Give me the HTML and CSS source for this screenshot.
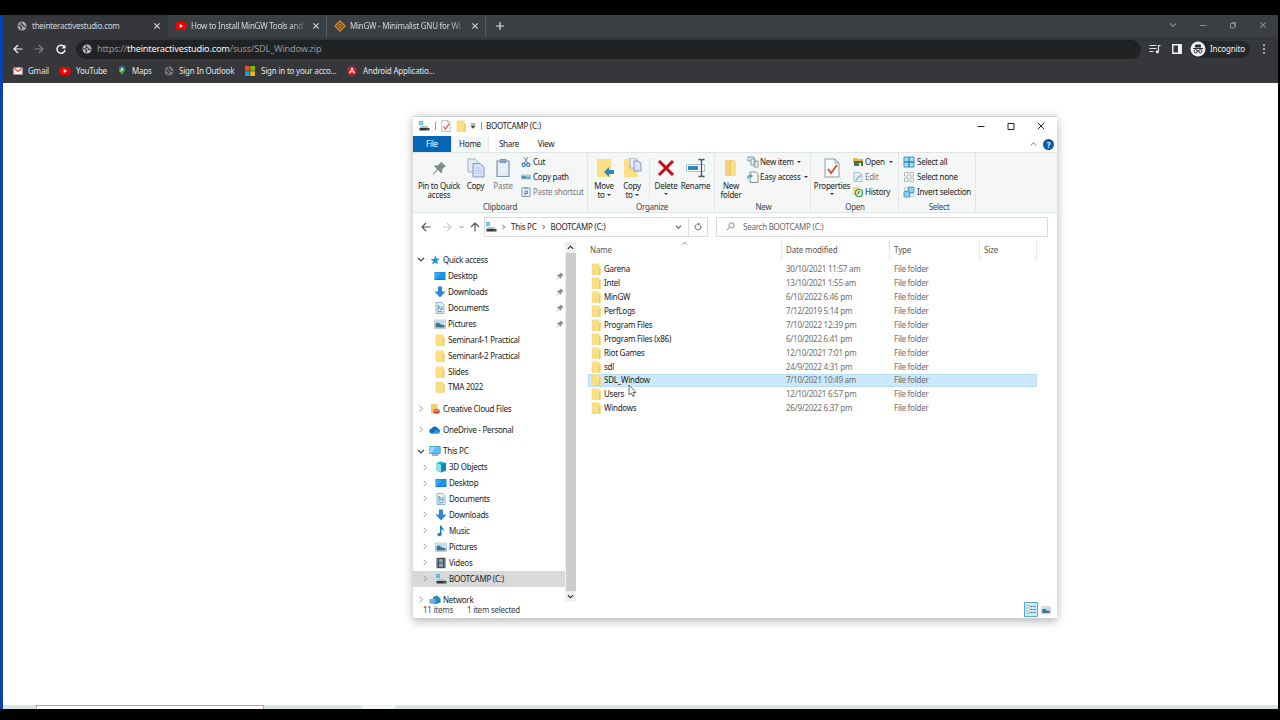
FILE: index.html
```
<!DOCTYPE html>
<html lang="en">
<head>
    <meta charset="UTF-8">
    <meta name="viewport" content="width=device-width, initial-scale=1.0">
    <title>theinteractivestudio.com</title>
    <link rel="stylesheet" href="styles.css">
</head>
<body>

    <!-- Shared icons -->
    <svg class="sprite">
        <symbol id="folder" viewBox="0 0 10 12"><path d="M1 .5h7.5v2L9.5 3v8.5H1z" fill="#fbdf85"/><path d="M8.300 3.500h1.200v8H7.500z" fill="#efcb68"/><path d="M1 .5v11h8.500" fill="none" stroke="#efd27a" stroke-width=".6"/></symbol>
        <symbol id="globe" viewBox="0 0 10 10"><circle cx="5" cy="5" r="4.500" fill="currentColor"/><path d="M1.300 4.200l2.500 1 .8 1.600-.8 1.700M4.500 1.500L4 3l2 .8.500 1.500 2.300.4" fill="none" stroke="#292a2d" stroke-width="1.100"/></symbol>
        <symbol id="youtube" viewBox="0 0 12 10"><rect x=".5" y="1" width="11" height="8" rx="2.500" fill="#f00000"/><path d="M4.700 3l3.400 2-3.400 2z" fill="#fff"/></symbol>
        <symbol id="close" viewBox="0 0 8 8"><path d="M1.300 1.300l5.400 5.400M6.700 1.300L1.300 6.700" fill="none" stroke="currentColor" stroke-width="1.100"/></symbol>
        <symbol id="right" viewBox="0 0 6 8"><path d="M1.500 1l3 3-3 3" fill="none" stroke="currentColor"/></symbol>
        <symbol id="down" viewBox="0 0 8 6"><path d="M1 1.500l3 3 3-3" fill="none" stroke="currentColor" stroke-width="1.200"/></symbol>
        <symbol id="up" viewBox="0 0 8 6"><path d="M1 4.500l3-3 3 3" fill="none" stroke="currentColor" stroke-width="1.200"/></symbol>
        <symbol id="arrow" viewBox="0 0 10 10"><path d="M9.500 5H1.200M5 1L1 5l4 4" fill="none" stroke="currentColor" stroke-width="1.200"/></symbol>
        <symbol id="drive" viewBox="0 0 12 12"><path d="M1 1h1.700v1.700H1zM3.300 1H5v1.700H3.300zM1 3.300h1.700V5H1zM3.300 3.300H5V5H3.300z" fill="#27b5d8"/><path d="M2.500 6h7l1.500 2.500H1.500z" fill="#b9bec2"/><path d="M1.500 8h10v2.500h-10z" fill="#30383c"/><path d="M8.500 8.800h2v.8h-2z" fill="#4fd36a"/></symbol>
        <symbol id="pin" viewBox="0 0 16 16"><path d="M9.500 1L15 6.500l-1.600.5-2.700 2.700.2 2.800-1.200 1L6.400 10.200 1.500 15l-.8-.3.4-.9L5.500 9.300 2.200 6.200l1.100-1.200 2.900.2L8.900 2.600z" fill="#828b91"/></symbol>
        <symbol id="desktop" viewBox="0 0 12 12"><path d="M.5 2h11v8H.5z" fill="#1378c8"/><path d="M1 2.500h10v6.500H1z" fill="#1896e6"/><path d="M1 2.500h6L2 9H1z" fill="#2eabf2"/></symbol>
        <symbol id="download" viewBox="0 0 12 12"><path d="M4 .5h4v5h3.500L6 11.500.5 5.500H4z" fill="#2e86d6"/></symbol>
        <symbol id="document" viewBox="0 0 12 12"><path d="M2 .5h6l2 2v9H2z" fill="#e9f2f8" stroke="#85a1b5" stroke-width=".8"/><path d="M4 3v5.500M4.500 3.500l2.500 4.500M8 4v4.500M3.500 9.700H8" stroke="#3787bb" stroke-width=".9" fill="none"/></symbol>
        <symbol id="picture" viewBox="0 0 12 12"><path d="M.5 2h11v8.500H.5z" fill="#e9f1f5" stroke="#a7b8c1" stroke-width=".7"/><path d="M1.500 3h9v3h-9z" fill="#b6dcf0"/><path d="M1.500 5.500l2.500-1 3 2 3.500.5v2.500h-9z" fill="#3f7287"/></symbol>
        <symbol id="check" viewBox="0 0 16 20"><path d="M1 1h10l4 4v14H1z" fill="#fbfcfd" stroke="#8f999f"/><path d="M11 1v4h4" fill="none" stroke="#8f999f"/><path d="M4 11l3 4 6-8" fill="none" stroke="#d7552d" stroke-width="2"/></symbol>
        <symbol id="pages" viewBox="0 0 18 20"><path d="M1 1h7l3 3v10H1z" fill="#e8edf8" stroke="#9fb0ca"/><path d="M6 5.500h7l4 3.500v10H6z" fill="#dbe3fa" stroke="#8498bd"/><path d="M8 10h6M8 12.500h7M8 15h7" stroke="#b9c6ea"/></symbol>
    </svg>

    <div class="screen">

        <!-- Browser chrome -->
        <div class="tabs">
            <div class="tab active"><svg class="ic10 gray"><use href="#globe"/></svg><span>theinteractivestudio.com</span><svg class="ic8"><use href="#close"/></svg></div>
            <div class="tab"><svg class="ic12"><use href="#youtube"/></svg><span class="fade">How to Install MinGW Tools and</span><svg class="ic8"><use href="#close"/></svg></div>
            <div class="tab"><svg class="ic12" viewBox="0 0 12 12"><path d="M6 1l5 5-5 5-5-5z" fill="none" stroke="#e88a1a" stroke-width="1.300"/><path d="M6 3.500L8.500 6 6 8.500 3.500 6z" fill="none" stroke="#e88a1a"/><path d="M6 4v4" stroke="#e88a1a"/></svg><span class="fade">MinGW - Minimalist GNU for Wi</span><svg class="ic8"><use href="#close"/></svg></div>
            <svg class="plus" viewBox="0 0 10 10"><path d="M5 1v8M1 5h8" stroke="#dfe1e5" stroke-width="1.200"/></svg>
            <div class="chrome-controls">
                <svg class="ic8"><use href="#down"/></svg>
                <svg class="ic8" viewBox="0 0 8 8"><path d="M.5 4.500h7" stroke="currentColor"/></svg>
                <svg class="ic8" viewBox="0 0 8 8"><path d="M1.500 2.500h4V7h-4zM3 2.500V1.500h3.500v4h-1" fill="none" stroke="currentColor"/></svg>
                <svg class="ic8"><use href="#close"/></svg>
            </div>
        </div>

        <div class="toolbar">
            <svg class="ic10 nav-back"><use href="#arrow"/></svg>
            <svg class="ic10 nav-next"><use href="#arrow"/></svg>
            <svg class="ic10 nav-reload" viewBox="0 0 10 10"><path d="M8.500 3.200A4 4 0 1 0 9 5.800" fill="none" stroke="#f1f3f4" stroke-width="1.500"/><path d="M9.500.5v4h-4z" fill="#f1f3f4"/></svg>
            <div class="omnibox"><svg class="ic10"><use href="#globe"/></svg><span class="url">https://<b>theinteractivestudio.com</b>/suss/SDL_Window.zip</span></div>
            <svg class="media" viewBox="0 0 12 10"><path d="M.5 1.500h7M.5 4.500h7M.5 7.500h4M9.500 7.500V1.500h2" fill="none" stroke="#dfe1e5" stroke-width="1.200"/><circle cx="8.300" cy="7.800" r="1.600" fill="#dfe1e5"/></svg>
            <svg class="panel" viewBox="0 0 10 10"><path d="M.8.8h8.400v8.400H.8z" fill="none" stroke="#f1f3f4" stroke-width="1.400"/><path d="M6 1h3v8H6z" fill="#f1f3f4"/></svg>
            <div class="incognito"><svg viewBox="0 0 16 16"><circle cx="8" cy="8" r="7.500" fill="#f1f3f4"/><path d="M5.500 3.500h5l.8 3H4.700zM3 7h10v.9H3z" fill="#292a2d"/><circle cx="5.700" cy="10.300" r="1.600" fill="none" stroke="#292a2d"/><circle cx="10.300" cy="10.300" r="1.600" fill="none" stroke="#292a2d"/><path d="M7 10h2" stroke="#292a2d"/></svg><span>Incognito</span></div>
            <svg class="dots" viewBox="0 0 4 10"><path d="M1.200.5h1.600v1.600H1.200zM1.200 4.200h1.600v1.600H1.200zM1.200 7.900h1.600v1.600H1.200z" fill="#f1f3f4"/></svg>
        </div>

        <div class="bookmarks">
            <a class="gmail"><svg class="ic10" viewBox="0 0 10 10"><path d="M.5 1.500h9v7h-9z" fill="#f6f3f2"/><path d="M1 2l4 3.500L9 2" fill="none" stroke="#df493c" stroke-width="1.300"/><path d="M.5 2h1v6.500h-1zM8.500 2h1v6.500h-1z" fill="#e8a29b"/></svg>Gmail</a>
            <a class="yt"><svg class="ic12"><use href="#youtube"/></svg>YouTube</a>
            <a class="maps"><svg class="ic10" viewBox="0 0 10 12"><path d="M5 .5a3.700 3.700 0 0 1 3.700 3.700C8.700 7 6 8 5 11.500 4 8 1.300 7 1.300 4.200A3.700 3.700 0 0 1 5 .5z" fill="#34a853"/><path d="M5 .5a3.700 3.700 0 0 0-3.300 2L4 4.200 7.300 1.300A3.700 3.700 0 0 0 5 .5z" fill="#4285f4"/><path d="M1.700 2.500L4 4.200 2 6.500A4 4 0 0 1 1.700 2.500z" fill="#ea4335"/><path d="M2 6.500L4 4.200l1 1L3.200 7.500z" fill="#fbbc04"/><circle cx="5" cy="4.200" r="1.300" fill="#fff"/></svg>Maps</a>
            <a class="outlook"><svg class="ic10 dim"><use href="#globe"/></svg>Sign In Outlook</a>
            <a class="ms"><svg class="ic10" viewBox="0 0 10 10"><path d="M0 0h4.700v4.700H0z" fill="#f25022"/><path d="M5.300 0H10v4.700H5.300z" fill="#7fba00"/><path d="M0 5.300h4.700V10H0z" fill="#00a4ef"/><path d="M5.300 5.300H10V10H5.300z" fill="#ffb900"/></svg>Sign in to your acco...</a>
            <a class="ng"><svg class="ic10" viewBox="0 0 10 10"><path d="M5 0l4.700 1.700L9 8 5 10 1 8 .3 1.700z" fill="#c8202f"/><path d="M2.500 7.500L5 1.800l2.500 5.700M3.500 5.800h3" fill="none" stroke="#fff"/></svg>Android Applicatio...</a>
        </div>

        <div class="page"></div>
        <div class="taskbar">
            <div class="search-strip"></div>
            <div class="task-gap"></div>
        </div>

        <!-- File Explorer window, floats over the page -->
        <div class="explorer">
            <div class="titlebar">
                <svg class="ic12"><use href="#drive"/></svg><i class="bar"></i>
                <svg class="t-check"><use href="#check"/></svg>
                <svg class="t-folder"><use href="#folder"/></svg>
                <svg class="t-menu" viewBox="0 0 6 6"><path d="M.8 1h4.400M1 3h4L3 5.300z" stroke="#444" stroke-width=".8" fill="#444"/></svg><i class="bar"></i>
                <span>BOOTCAMP (C:)</span>
                <div class="win-controls">
                    <svg class="ic8" viewBox="0 0 8 8"><path d="M.5 4.500h7" stroke="#222"/></svg>
                    <svg class="ic8" viewBox="0 0 8 8"><path d="M1 1.500h6v6H1z" fill="none" stroke="#222"/></svg>
                    <svg class="ic8" viewBox="0 0 8 8"><path d="M.8.8l6.400 6.400M7.200.8L.8 7.200" stroke="#222"/></svg>
                </div>
            </div>

            <div class="menu">
                <span class="file">File</span><span class="home">Home</span><span class="share">Share</span><span class="view">View</span>
                <svg class="collapse"><use href="#up"/></svg>
                <span class="help">?</span>
            </div>

            <div class="ribbon">
                <div class="group clipboard">
                    <div class="buttons">
                        <div class="big w52"><svg class="b-pin"><use href="#pin"/></svg>Pin to Quick<br>access</div>
                        <div class="big w21"><svg><use href="#pages"/></svg>Copy</div>
                        <div class="big w34 off"><svg viewBox="0 0 16 20"><path d="M2 3h12v15.500H2z" fill="#dfeafa" stroke="#7f97b2" stroke-width="1.200"/><path d="M5 1.500h6v3H5z" fill="#92a7bb" stroke="#7f97b2"/><path d="M4 8h8M4 11h8M4 14h8" stroke="#f7fbff"/></svg>Paste</div>
                        <div class="smalls">
                            <div><svg class="ic10" viewBox="0 0 10 10"><path d="M3 0l3.500 6M7 0L3.500 6" stroke="#6a8aa5" fill="none"/><circle cx="2.700" cy="7.700" r="1.600" fill="none" stroke="#2d82b7" stroke-width="1.200"/><circle cx="7.300" cy="7.700" r="1.600" fill="none" stroke="#2d82b7" stroke-width="1.200"/></svg>Cut</div>
                            <div><svg class="ic10" viewBox="0 0 10 10"><path d="M0 2.500h10v5H0z" fill="#9ecbdf"/><path d="M1 4l1 2.500 1-2 1 2L5 4M6 6h3" fill="none" stroke="#29667f" stroke-width=".8"/></svg>Copy path</div>
                            <div class="off"><svg class="ic10" viewBox="0 0 10 10"><path d="M1 1h8v8.500H1z" fill="#eef4fb" stroke="#7c97b8"/><path d="M4 8V4h2.500v2.500H4M3.500 1h3" fill="none" stroke="#4f79aa"/></svg>Paste shortcut</div>
                        </div>
                    </div>
                    <div class="label">Clipboard</div>
                </div>
                <div class="group organize">
                    <div class="buttons">
                        <div class="big w28"><svg viewBox="0 0 20 20"><path d="M3 1h14v18H3z" fill="#fbdf85"/><path d="M10 14l5-5v3h5v4h-5v3z" fill="#2988b5"/></svg>Move<br>to<i class="caret"></i></div>
                        <div class="big w28"><svg viewBox="0 0 20 20"><path d="M2 1h14v18H2z" fill="#fbdf85"/><path d="M8 0h5l2 2v8H8z" fill="#e8edf8" stroke="#9fb0ca"/><path d="M12 3h4l3 2v8h-7z" fill="#dbe3fa" stroke="#8498bd"/></svg>Copy<br>to<i class="caret"></i></div>
                        <i class="rule"></i>
                        <div class="big w28"><svg viewBox="0 0 20 20"><path d="M3 3l14 14M17 3L3 17" stroke="#c40e17" stroke-width="3"/></svg>Delete<i class="caret under"></i></div>
                        <div class="big w31"><svg viewBox="0 0 20 20"><path d="M.5 6.500h18v7H.5z" fill="#fff" stroke="#9fc5db"/><path d="M2 8h10v4H2z" fill="#2f87b7"/><path d="M12.500 1.500h2l1 1 1-1h2M15.500 2.500v15M12.500 18.500h2l1-1 1 1h2" fill="none" stroke="#43525c" stroke-width="1.300"/></svg>Rename</div>
                    </div>
                    <div class="label">Organize</div>
                </div>
                <div class="group new">
                    <div class="buttons">
                        <div class="big w28"><svg viewBox="0 0 16 20"><path d="M2 2h9v16H2z" fill="#f6d277"/><path d="M8 3h5v15H8z" fill="#fbe08a"/><path d="M7.500 3v15" stroke="#ecc668"/></svg>New<br>folder</div>
                        <div class="smalls">
                            <div><svg class="ic12" viewBox="0 0 12 12"><path d="M1 1h6v4H1z" fill="#e7f3f8" stroke="#7a9aac"/><path d="M4 3h4v6H4zM7 5h4v6H7z" fill="#f2f7fa" stroke="#7a9aac"/></svg>New item<i class="caret"></i></div>
                            <div><svg class="ic12" viewBox="0 0 12 12"><path d="M3 1h6l2 2v8.500H3z" fill="#f7fafc" stroke="#7f929e"/><path d="M1 8V5h4M3.500 3.500L5.500 5 3.500 6.500" fill="none" stroke="#2d82b7"/></svg>Easy access<i class="caret"></i></div>
                        </div>
                    </div>
                    <div class="label">New</div>
                </div>
                <div class="group open">
                    <div class="buttons">
                        <div class="big w40"><svg><use href="#check"/></svg>Properties<i class="caret under"></i></div>
                        <div class="smalls">
                            <div><svg class="ic10" viewBox="0 0 10 10"><path d="M0 1h4l1 1h5v4H0z" fill="#e7b948"/><path d="M1 4h9v5H8V6H6v3H1z" fill="#45764a"/></svg>Open<i class="caret"></i></div>
                            <div class="off"><svg class="ic10" viewBox="0 0 10 10"><path d="M1 .5h6l2 2v7H1z" fill="#e5effb" stroke="#a7bfdb"/><path d="M3 8l5-5" stroke="#8caad0" stroke-width="1.500"/></svg>Edit</div>
                            <div><svg class="ic10" viewBox="0 0 10 10"><path d="M0 0h7v8H0z" fill="#f5db70"/><circle cx="6" cy="6" r="3.500" fill="#e8f4e3" stroke="#2e9d45" stroke-width="1.200"/><path d="M6 4v2L4.500 7" fill="none" stroke="#333"/></svg>History</div>
                        </div>
                    </div>
                    <div class="label">Open</div>
                </div>
                <div class="group select">
                    <div class="buttons">
                        <div class="smalls">
                            <div><svg class="ic12" viewBox="0 0 12 12"><path d="M1 1h10v10H1z" fill="#a5dcf6" stroke="#3995c6"/><path d="M6 1v10M1 6h10" stroke="#2c82b5" stroke-width="1.300"/></svg>Select all</div>
                            <div><svg class="ic12" viewBox="0 0 12 12"><path d="M1.500 1.500h3.500v3.500H1.500zM7 1.500h3.500v3.500H7zM1.500 7h3.500v3.500H1.500zM7 7h3.500v3.500H7z" fill="#fff" stroke="#a1a7aa" stroke-width=".8"/></svg>Select none</div>
                            <div><svg class="ic12" viewBox="0 0 12 12"><path d="M5.500 1h5.500v5.500H5.500zM1 5.500h5.500V11H1z" fill="#8ed0f0" stroke="#4ba2cd"/><path d="M1.500 1.500h3v3h-3zM7.500 7.500h3v3h-3z" fill="#fff" stroke="#9fc4d8" stroke-width=".8"/></svg>Invert selection</div>
                        </div>
                    </div>
                    <div class="label">Select</div>
                </div>
            </div>

            <div class="address-row">
                <svg class="ic10 a-back"><use href="#arrow"/></svg>
                <svg class="ic10 a-next"><use href="#arrow"/></svg>
                <svg class="a-recent"><use href="#down"/></svg>
                <svg class="ic10 a-up"><use href="#arrow"/></svg>
                <div class="address">
                    <svg class="ic12"><use href="#drive"/></svg>
                    <svg class="sep"><use href="#right"/></svg><span>This PC</span>
                    <svg class="sep"><use href="#right"/></svg><span>BOOTCAMP (C:)</span>
                    <svg class="a-drop"><use href="#down"/></svg>
                    <div class="refresh"><svg viewBox="0 0 10 10"><path d="M7 1.800A3.700 3.700 0 1 1 3.200 1.700" fill="none" stroke="#555" stroke-width="1.200"/><path d="M4.500 0v3.500L7.500 1z" fill="#555"/></svg></div>
                </div>
                <div class="search"><svg viewBox="0 0 10 10"><circle cx="6.200" cy="3.700" r="2.900" fill="none" stroke="#777"/><path d="M4 6L1 9" stroke="#777"/></svg>Search BOOTCAMP (C:)</div>
            </div>

            <div class="content">
                <div class="tree">
                    <div class="node top open-node"><svg class="chev"><use href="#down"/></svg><svg class="ic10" viewBox="0 0 10 10"><path d="M5.500.5l1 3 3.200.2-2.400 2 .7 3.500-2.800-1.800L2 9.500l1-3.500L.5 4h3.300z" fill="#2594d8"/></svg>Quick access</div>
                    <div class="node"><svg class="ic12"><use href="#desktop"/></svg>Desktop<svg class="pinned"><use href="#pin"/></svg></div>
                    <div class="node"><svg class="ic12"><use href="#download"/></svg>Downloads<svg class="pinned"><use href="#pin"/></svg></div>
                    <div class="node"><svg class="ic12"><use href="#document"/></svg>Documents<svg class="pinned"><use href="#pin"/></svg></div>
                    <div class="node"><svg class="ic12"><use href="#picture"/></svg>Pictures<svg class="pinned"><use href="#pin"/></svg></div>
                    <div class="node"><svg class="ic12"><use href="#folder"/></svg>Seminar4-1 Practical</div>
                    <div class="node"><svg class="ic12"><use href="#folder"/></svg>Seminar4-2 Practical</div>
                    <div class="node"><svg class="ic12"><use href="#folder"/></svg>Slides</div>
                    <div class="node"><svg class="ic12"><use href="#folder"/></svg>TMA 2022</div>
                    <div class="node top gap"><svg class="chev"><use href="#right"/></svg><svg class="ic10" viewBox="0 0 10 10"><path d="M1 0h6.500v9.500H1z" fill="#f7cd68"/><ellipse cx="6.500" cy="7.200" rx="3.400" ry="2.500" fill="#d9432b"/><path d="M4.500 7.500a1 1 0 0 1 2-.5 1 1 0 0 1 2 .5" fill="none" stroke="#fff" stroke-width=".7"/></svg>Creative Cloud Files</div>
                    <div class="node top gap"><svg class="chev"><use href="#right"/></svg><svg class="ic12 wide" viewBox="0 0 12 10"><path d="M3 8.500a2.500 2.500 0 0 1-.3-5 3.400 3.400 0 0 1 6.300.2 2.500 2.500 0 0 1 .3 4.800z" fill="#0f6cbd"/><path d="M3 8.500l4.500-3.700 3.500 3q-.5.700-1.700.7z" fill="#28a0e8"/></svg>OneDrive - Personal</div>
                    <div class="node top gap open-node"><svg class="chev"><use href="#down"/></svg><svg class="ic12 wide" viewBox="0 0 12 10"><path d="M.8.5h10.400v7H.8z" fill="#5fc1f2" stroke="#3b8fbe" stroke-width=".8"/><path d="M1.200 1h5L2.500 7H1.200z" fill="#9bdcfb"/><path d="M3 9h6.500" stroke="#6b8899" stroke-width="1.200"/></svg>This PC</div>
                    <div class="node"><svg class="chev"><use href="#right"/></svg><svg class="ic12" viewBox="0 0 12 12"><path d="M1 2l5-1.500 5 1.500v7.500L6 11.500 1 9.500z" fill="#1bb0c9"/><path d="M1 2l5 1.500V11.500L1 9.500z" fill="#8be0ea"/><path d="M6 3.500L11 2v7.500l-5 2z" fill="#108ba9"/></svg>3D Objects</div>
                    <div class="node"><svg class="chev"><use href="#right"/></svg><svg class="ic12"><use href="#desktop"/></svg>Desktop</div>
                    <div class="node"><svg class="chev"><use href="#right"/></svg><svg class="ic12"><use href="#document"/></svg>Documents</div>
                    <div class="node"><svg class="chev"><use href="#right"/></svg><svg class="ic12"><use href="#download"/></svg>Downloads</div>
                    <div class="node"><svg class="chev"><use href="#right"/></svg><svg class="ic12" viewBox="0 0 12 12"><path d="M5 .5h1.500C6.500 3 9.500 3 9 6.500 8.500 5 7.500 4.500 6.500 4.500V9.500H5z" fill="#1586ca"/><ellipse cx="4.500" cy="9.500" rx="2.200" ry="1.800" fill="#1586ca"/></svg>Music</div>
                    <div class="node"><svg class="chev"><use href="#right"/></svg><svg class="ic12"><use href="#picture"/></svg>Pictures</div>
                    <div class="node"><svg class="chev"><use href="#right"/></svg><svg class="ic12" viewBox="0 0 12 12"><path d="M1.500.8h9v10.400h-9z" fill="#3f474c"/><path d="M4 2h4v3.500H4zM4 6.500h4V10H4z" fill="#87a6b5"/><path d="M2.600 1.500v9.500M9.400 1.500v9.500" stroke="#bdc5c9" stroke-width=".8" stroke-dasharray="1 1"/></svg>Videos</div>
                    <div class="node current"><svg class="chev"><use href="#right"/></svg><svg class="ic12"><use href="#drive"/></svg>BOOTCAMP (C:)</div>
                    <div class="node top gap"><svg class="chev"><use href="#right"/></svg><svg class="ic12 wide" viewBox="0 0 12 10"><path d="M4 2l4-1.500 3.500 3v4l-4 1.500H4z" fill="#2789c4"/><path d="M.5 4h6v4.500h-6z" fill="#5bb3df"/></svg>Network</div>
                </div>
                <div class="scroll"><svg><use href="#up"/></svg><div class="thumb"></div><svg><use href="#down"/></svg></div>

                <div class="list">
                    <svg class="sort"><use href="#up"/></svg>
                    <div class="row head"><span>Name</span><span>Date modified</span><span>Type</span><span>Size</span></div>
                    <div class="row"><svg><use href="#folder"/></svg><b>Garena</b><span>30/10/2021 11:57 am</span><span>File folder</span></div>
                    <div class="row"><svg><use href="#folder"/></svg><b>Intel</b><span>13/10/2021 1:55 am</span><span>File folder</span></div>
                    <div class="row"><svg><use href="#folder"/></svg><b>MinGW</b><span>6/10/2022 6:46 pm</span><span>File folder</span></div>
                    <div class="row"><svg><use href="#folder"/></svg><b>PerfLogs</b><span>7/12/2019 5:14 pm</span><span>File folder</span></div>
                    <div class="row"><svg><use href="#folder"/></svg><b>Program Files</b><span>7/10/2022 12:39 pm</span><span>File folder</span></div>
                    <div class="row"><svg><use href="#folder"/></svg><b>Program Files (x86)</b><span>6/10/2022 6:41 pm</span><span>File folder</span></div>
                    <div class="row"><svg><use href="#folder"/></svg><b>Riot Games</b><span>12/10/2021 7:01 pm</span><span>File folder</span></div>
                    <div class="row"><svg><use href="#folder"/></svg><b>sdl</b><span>24/9/2022 4:31 pm</span><span>File folder</span></div>
                    <div class="row selected"><svg><use href="#folder"/></svg><b>SDL_Window</b><span>7/10/2021 10:49 am</span><span>File folder</span></div>
                    <div class="row"><svg><use href="#folder"/></svg><b>Users</b><span>12/10/2021 6:57 pm</span><span>File folder</span></div>
                    <div class="row"><svg><use href="#folder"/></svg><b>Windows</b><span>26/9/2022 6:37 pm</span><span>File folder</span></div>
                </div>
            </div>

            <div class="status">
                <span>11 items</span><span>1 item selected</span>
                <svg class="details" viewBox="0 0 14 15"><path d="M.5.5h13v14H.5z" fill="#c9ebf7" stroke="#58a9c6"/><path d="M3 3.500h2v8H3z" fill="#fff" stroke="#7a98a6" stroke-width=".6"/><path d="M6.500 4.500h2M9.500 4.500h2M6.500 7.500h2M9.500 7.500h2M6.500 10.500h2M9.500 10.500h2" stroke="#52717f"/></svg>
                <svg class="ic10"><use href="#picture"/></svg>
            </div>
        </div>

        <svg class="cursor" viewBox="0 0 10 14"><path d="M1 1v10l2.300-2 1.500 3.500 1.600-.7L5 8.500h3z" fill="#fff" stroke="#444" stroke-width=".8"/></svg>
    </div>

</body>
</html>
```
FILE: styles.css
```
* {
    box-sizing: border-box;
}
body {
    margin: 0;
    width: 1280px;
    height: 720px;
    overflow: hidden;
    background: #000;
    padding: 15px 2px 11px 0;
    font-family: "Noto Sans", "Open Sans", sans-serif;
    font-size: 8px;
    letter-spacing: -.25px;
    line-height: 10px;
    white-space: nowrap;
    color: #1a1a1a;
}
svg {
    flex: none;
    display: block;
}
.sprite {
    display: none;
}
.ic8 {
    width: 8px;
    height: 8px;
}
.ic10 {
    width: 10px;
    height: 10px;
}
.ic12 {
    width: 12px;
    height: 12px;
}
.screen {
    position: relative;
    height: 694px;
    border-left: 3px solid #0b40b0;
    background: #fff;
    display: flex;
    flex-direction: column;
}

/* browser */
.tabs {
    height: 22px;
    background: #3c3f42;
    display: flex;
    align-items: center;
    color: #d5d7da;
}
.tab {
    width: 159px;
    height: 22px;
    padding: 0 6px 0 7px;
    display: flex;
    align-items: center;
    gap: 4px;
    border-right: 1px solid #5b5e62;
}
.tab span {
    flex: 1;
}
.tab.active {
    width: 165px;
    padding: 0 7px 0 14px;
    gap: 5px;
    background: #35373a;
    border: 0;
}
.fade {
    -webkit-mask-image: linear-gradient(90deg, #000 85%, transparent);
    mask-image: linear-gradient(90deg, #000 85%, transparent);
}
.gray {
    color: #a6a9ad;
}
.plus {
    width: 10px;
    height: 10px;
    margin-left: 9px;
}
.chrome-controls {
    margin-left: auto;
    display: flex;
    gap: 22px;
    padding: 0 11px 3px 0;
    color: #85888b;
}
.toolbar {
    height: 24px;
    background: #35373a;
    display: flex;
    align-items: center;
    color: #f1f3f4;
}
.nav-back {
    margin-left: 10px;
}
.nav-next {
    margin-left: 11px;
    transform: scaleX(-1);
    color: #818488;
}
.nav-reload {
    margin-left: 12px;
}
.omnibox {
    margin-left: 10px;
    width: 1065px;
    height: 19px;
    border-radius: 10px;
    background: #202224;
    display: flex;
    align-items: center;
    padding-left: 6px;
    gap: 5px;
    color: #b5b8bb;
}
.url {
    font-size: 9.2px;
    letter-spacing: -.2px;
    color: #93969a;
}
.url b {
    font-weight: 400;
    color: #f4f5f6;
}
.media {
    width: 12px;
    height: 10px;
    margin-left: 8px;
}
.panel {
    width: 10px;
    height: 10px;
    margin-left: 11px;
}
.incognito {
    margin-left: 8px;
    width: 60px;
    height: 17px;
    border-radius: 9px;
    background: #25272a;
    display: flex;
    align-items: center;
    gap: 4px;
    letter-spacing: -.1px;
}
.incognito svg {
    width: 16px;
    height: 16px;
}
.dots {
    width: 4px;
    height: 10px;
    margin-left: 12px;
}
.bookmarks {
    height: 22px;
    background: #35373a;
    display: flex;
    align-items: center;
    color: #e3e5e7;
    padding: 0 0 3px 10px;
    letter-spacing: -.2px;
}
.bookmarks a {
    display: flex;
    align-items: center;
    gap: 5px;
}
.gmail {
    width: 46px;
}
.yt {
    width: 58px;
}
.maps {
    width: 47px;
}
.outlook {
    width: 81px;
}
.ms {
    width: 102px;
}
.bookmarks .ms,
.bookmarks .ng {
    gap: 6px;
}
.dim {
    color: #777a7e;
}
.page {
    flex: 1;
}
.taskbar {
    height: 4px;
    background: #d9e5e4;
    display: flex;
}
.search-strip {
    margin-left: 33px;
    width: 228px;
    background: #fff;
    border: solid #aaa;
    border-width: 1px 1px 0;
}
.task-gap {
    margin-left: 98px;
    width: 33px;
    background: #f0f6f5;
}

/* explorer window */
.explorer {
    position: absolute;
    left: 410px;
    top: 101px;
    width: 644px;
    height: 503px;
    background: #fff;
    border: 1px solid #d0d0d0;
    border-width: 1px 0;
    box-shadow: 0 2px 9px rgba(0, 0, 0, .3);
    display: flex;
    flex-direction: column;
}
.titlebar {
    height: 20px;
    display: flex;
    align-items: center;
    padding: 0 0 1px 5px;
}
.bar {
    width: 1px;
    height: 8px;
    background: #999;
    margin: 0 5px;
}
.t-menu + .bar {
    margin-right: 4px;
}
.t-check {
    width: 10px;
    height: 12px;
    margin-right: 5px;
}
.t-folder {
    width: 10px;
    height: 12px;
    margin-right: 4px;
}
.t-menu {
    width: 6px;
    height: 6px;
}
.win-controls {
    margin-left: auto;
    display: flex;
    gap: 22px;
    padding-right: 12px;
}
.menu {
    height: 16px;
    display: flex;
    align-items: center;
    text-align: center;
}
.file {
    width: 38px;
    line-height: 16px;
    background: #0765b6;
    color: #fff;
}
.home {
    width: 38px;
    line-height: 16px;
    background: #f5f7f7;
    border: 1px solid #e4e7e8;
    border-width: 0 1px;
}
.share {
    width: 40px;
}
.view {
    width: 34px;
}
.collapse {
    width: 7px;
    height: 6px;
    margin-left: auto;
    color: #999;
}
.help {
    width: 11px;
    height: 11px;
    margin: 0 3px 0 6px;
    border-radius: 50%;
    background: #0a5ba8;
    color: #fff;
    font-weight: 700;
    line-height: 11px;
}
.ribbon {
    height: 61px;
    background: #f5f7f7;
    border: solid #e1e4e5;
    border-width: 1px 0;
    display: flex;
}
.group {
    height: 59px;
    border-right: 1px solid #e3e6e7;
    display: flex;
    flex-direction: column;
}
.clipboard {
    width: 175px;
}
.organize {
    width: 127px;
    padding-left: 2px;
}
.new {
    width: 96px;
    padding-left: 2px;
}
.open {
    width: 88px;
    padding-left: 1px;
}
.select {
    width: 77px;
    padding-left: 4px;
}
.buttons {
    height: 49px;
    display: flex;
}
.label {
    text-align: center;
    color: #444;
}
.big {
    text-align: center;
    padding-top: 5px;
    line-height: 9px;
}
.big svg {
    width: 20px;
    height: 20px;
    margin: 0 auto 3px;
}
.big .b-pin {
    width: 15px;
}
.w21 { width: 21px; }
.w28 { width: 28px; }
.w31 { width: 31px; }
.w34 { width: 34px; }
.w40 { width: 40px; }
.w52 { width: 52px; }
.off {
    color: #777;
}
.smalls {
    padding-top: 2px;
}
.smalls div {
    height: 14.6px;
    display: flex;
    align-items: center;
    gap: 2px;
}
.clipboard .smalls,
.open .smalls {
    padding-left: 1px;
}
.new .smalls {
    padding-left: 2px;
}
.new .smalls div {
    gap: 1px;
}
.caret {
    display: inline-block;
    border: 2px solid transparent;
    border-top: 2.5px solid #333;
    border-bottom: 0;
    margin-left: 2px;
    vertical-align: 2px;
}
.caret.under {
    display: block;
    width: 0;
    margin: 3px auto 0;
}
.rule {
    width: 1px;
    height: 40px;
    margin: 5px 2px 0 3px;
    background: #e3e6e7;
}
.address-row {
    height: 28px;
    display: flex;
    align-items: center;
    color: #555;
}
.a-back {
    margin-left: 8px;
}
.a-next {
    margin-left: 11px;
    transform: scaleX(-1);
    color: #ccc;
}
.a-recent {
    width: 5px;
    height: 4px;
    margin-left: 7px;
}
.a-up {
    margin-left: 6px;
    transform: rotate(90deg);
}
.address {
    margin-left: 4px;
    width: 224px;
    height: 20px;
    border: 1px solid #dcdcdc;
    display: flex;
    align-items: center;
    color: #222;
}
.sep {
    width: 5px;
    height: 6px;
    margin: 0 5px 0 4px;
}
.a-drop {
    width: 7px;
    height: 6px;
    margin: 0 6px 0 auto;
    color: #555;
}
.refresh {
    width: 19px;
    height: 18px;
    border-left: 1px solid #dcdcdc;
    display: flex;
    align-items: center;
    justify-content: center;
}
.refresh svg {
    width: 8px;
    height: 8px;
}
.search {
    margin-left: 8px;
    width: 332px;
    height: 20px;
    border: 1px solid #dcdcdc;
    display: flex;
    align-items: center;
    padding-left: 9px;
    gap: 8px;
    color: #666;
}
.search svg {
    width: 9px;
    height: 9px;
}
.content {
    height: 362px;
    display: flex;
}
.tree {
    width: 152px;
    padding-top: 12px;
}
.node {
    height: 15.95px;
    padding-left: 21px;
    display: flex;
    align-items: center;
    gap: 2px;
}
.node .chev {
    width: 6px;
    height: 7px;
    margin: 0 5px 0 -12px;
    color: #888;
}
.node.top {
    padding-left: 18px;
    gap: 3px;
}
.node.top .chev {
    margin-left: -13px;
    margin-right: 3px;
}
.node.top.open-node .chev {
    width: 8px;
    margin: 0 2px 0 -14px;
    color: #444;
}
.node .wide {
    margin: 0 -1px 0 -1px;
}
.gap {
    margin-top: 5.3px;
}
.current {
    background: #d9d9d9;
}
.pinned {
    width: 8px;
    height: 8px;
    margin-left: auto;
    margin-right: 1px;
}
.scroll {
    width: 11px;
    margin-top: 2px;
    background: #f0f0f0;
    display: flex;
    flex-direction: column;
    align-items: center;
}
.scroll svg {
    width: 7px;
    height: 11px;
}
.thumb {
    width: 10px;
    flex: 1;
    background: #cdcdcd;
}
.list {
    flex: 1;
    padding-left: 12px;
    position: relative;
    color: #6d6d6d;
}
.sort {
    position: absolute;
    left: 105px;
    top: 1px;
    width: 7px;
    height: 5px;
    color: #888;
}
.row {
    width: 449px;
    height: 13.95px;
    display: grid;
    grid-template-columns: 16px 182px 108px 1fr;
    align-items: center;
}
.row svg {
    width: 10px;
    height: 12px;
    margin-left: 3px;
}
.row b {
    font-weight: 400;
    color: #1a1a1a;
}
.head {
    height: 20px;
    margin-bottom: 2px;
    grid-template-columns: 194px 108px 90px 1fr;
    color: #555;
    letter-spacing: -.15px;
}
.head span {
    padding-left: 4px;
    line-height: 20px;
    border-right: 1px solid #e8e8e8;
}
.head span:first-child {
    padding-left: 2px;
}
.selected {
    background: #cce8fb;
    box-shadow: inset 0 0 0 1px #b9dff7;
}
.status {
    flex: 1;
    display: flex;
    align-items: center;
    padding: 0 6px 1px 10px;
    gap: 14px;
    color: #444;
}
.details {
    width: 14px;
    height: 15px;
    margin-left: auto;
    margin-right: -11px;
}
.cursor {
    position: absolute;
    left: 625px;
    top: 369px;
    width: 10px;
    height: 14px;
}
```
